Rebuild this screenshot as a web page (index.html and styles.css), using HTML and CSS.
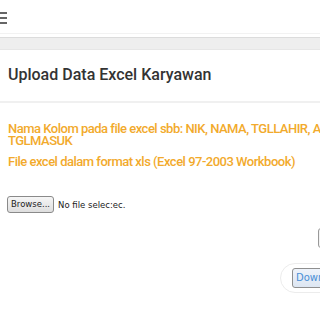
FILE: index.html
```html
<!DOCTYPE html>
<html>
<head>
<meta charset="utf-8">
<link rel="stylesheet" href="styles.css">
</head>
<body>
<div class="page">
  <header class="topbar">
    <div class="burger"><span></span><span></span><span></span></div>
  </header>
  <div class="band"></div>
  <h1 class="title">Upload Data Excel Karyawan</h1>
  <div class="divider"></div>
  <div class="notes">
    <p class="note">Nama Kolom pada file excel sbb: NIK, NAMA, TGLLAHIR, ALAMAT, TGLMASUK</p>
    <p class="note">File excel dalam format xls (Excel 97-2003 Workbook)</p>
  </div>
  <div class="file-row">
    <span class="browse">Browse...</span>
    <span class="nofile">No file selec:ec.</span>
  </div>
  <div class="right-row">
    <span class="upload-btn">Upload</span>
  </div>
  <div class="right-row dl-row">
    <span class="pill"><span class="dl-btn">Download Template</span></span>
  </div>
</div>
</body>
</html>
```
FILE: styles.css
```css
html, body {
  margin: 0;
  padding: 0;
  background: #fff;
  overflow: hidden;
}
.page {
  width: 320px;
  height: 320px;
  overflow: hidden;
  font-family: Roboto, "Liberation Sans", sans-serif;
}
.topbar {
  height: 33px;
  border-bottom: 1px solid #f2f2f2;
  position: relative;
}
.burger {
  position: absolute;
  left: -6px;
  top: 12px;
  width: 13px;
  display: flex;
  flex-direction: column;
  gap: 3px;
}
.burger span {
  display: block;
  height: 2px;
  background: #666;
}
.band {
  margin-top: 3px;
  height: 11px;
  background: #eeeeee;
  border-top: 1px solid #dcdcdc;
  border-bottom: 1px solid #e6e6e6;
}
.title {
  margin: 0;
  padding: 15px 0 0 8px;
  height: 36px;
  font-size: 16px;
  font-weight: 500;
  color: #333;
  line-height: 20px;
}
.divider {
  height: 2px;
  background: #f0f0f0;
}
.notes {
  padding: 20px 0 0 8px;
  width: 420px;
}
.note {
  margin: 0 0 9px 0;
  font-size: 13px;
  font-weight: 500;
  line-height: 12px;
  color: #f2aa2c;
  letter-spacing: -0.5px;
}
.note:first-child {
  width: 375px;
}
.file-row {
  margin-top: 28px;
  padding-left: 7px;
  display: flex;
  align-items: center;
  gap: 4px;
  font-family: "DejaVu Sans", sans-serif;
  font-size: 8.5px;
  color: #222;
}
.browse {
  border: 1px solid #8a8a8a;
  border-radius: 3px;
  background: linear-gradient(#f6f6f6, #dedede);
  padding: 2px 3px;
  height: 11px;
  line-height: 11px;
}
.right-row {
  display: flex;
  justify-content: flex-end;
  margin-top: 15px;
  width: 360px;
}
.upload-btn {
  display: block;
  height: 18px;
  width: 40px;
  border: 1px solid #999;
  border-radius: 3px;
  background: #f2f2f2;
  font-size: 10px;
  line-height: 18px;
  color: #333;
  text-align: center;
}
.dl-row {
  margin-top: 15px;
  justify-content: flex-start;
  padding-left: 280px;
}
.pill {
  display: flex;
  align-items: center;
  padding: 4px 8px 4px 11px;
  border: 1px solid #ececec;
  border-radius: 15px;
  background: #fff;
}
.dl-btn {
  display: block;
  height: 18px;
  padding: 0 3px;
  border: 1px solid #8f8f8f;
  border-radius: 3px;
  background: linear-gradient(#eef3fa, #dde6f2);
  font-family: "DejaVu Sans", sans-serif;
  font-size: 10px;
  line-height: 18px;
  color: #4a8fd6;
  white-space: nowrap;
}
```
